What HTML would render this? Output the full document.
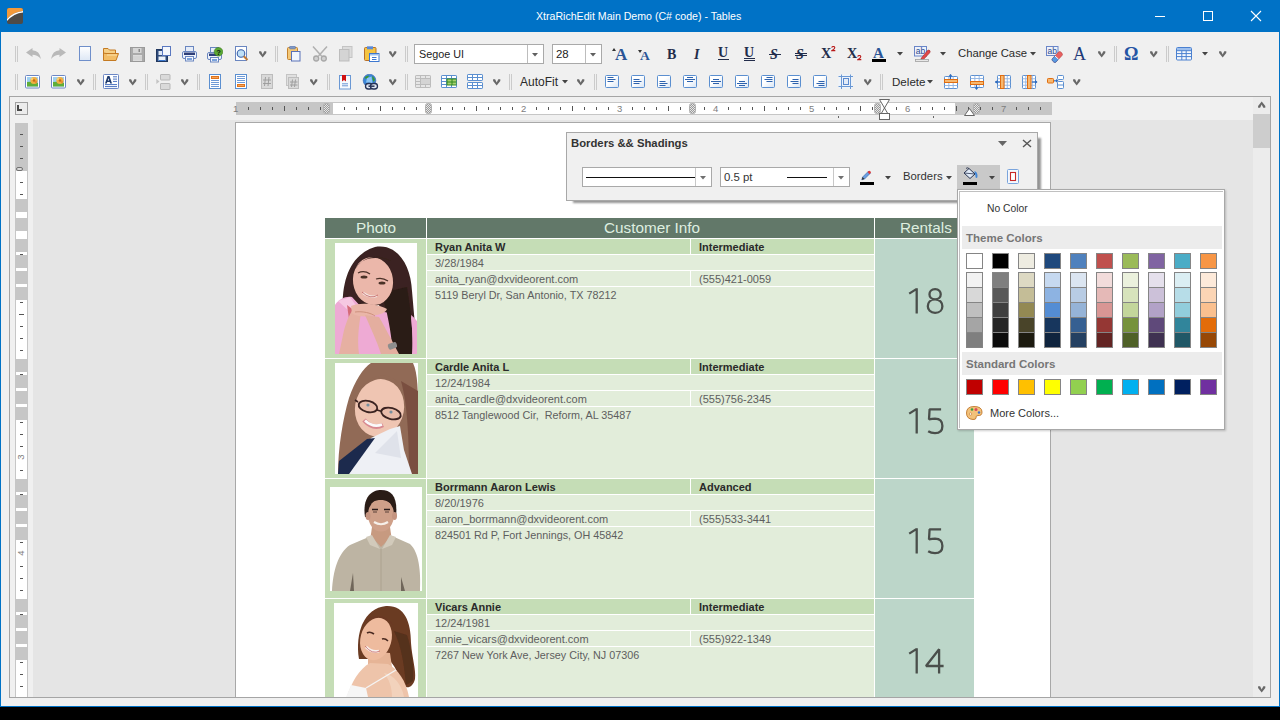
<!DOCTYPE html>
<html><head><meta charset="utf-8">
<style>
*{margin:0;padding:0;box-sizing:border-box}
html,body{width:1280px;height:720px;overflow:hidden;background:#000;font-family:"Liberation Sans", sans-serif;}
.a{position:absolute}
.win{position:absolute;left:0;top:0;width:1280px;height:707px;background:#0072c6}
.client{position:absolute;left:1px;top:32px;width:1278px;height:674px;background:#f0f0f0}
.t{position:absolute;white-space:pre;line-height:1}
.sep{position:absolute;width:3px;height:16px;border-left:1px solid #cbcbcb;border-right:1px solid #cbcbcb}
.chev{position:absolute;width:8px;height:6px}
</style></head><body>
<div class="win">

<svg class="a" style="left:7px;top:8px" width="16" height="16" viewBox="0 0 16 16">
<rect x="0" y="0" width="16" height="16" rx="2" fill="#4d4b48"/>
<path d="M2 0 H14 Q16 0 16 2 V3 Q6 4 0 11 V2 Q0 0 2 0Z" fill="#f39a3a"/>
<path d="M0 11 Q6 4 16 3 V4.6 Q7 5.5 0 13Z" fill="#fff"/>
</svg>
<div class="t" style="left:536px;top:11px;font-size:10.6px;color:#fff">XtraRichEdit Main Demo (C# code) - Tables</div>
<div class="a" style="left:1155px;top:16px;width:10px;height:1px;background:#fff"></div>
<div class="a" style="left:1203px;top:11px;width:10px;height:10px;border:1px solid #fff"></div>
<svg class="a" style="left:1250px;top:10px" width="12" height="12" viewBox="0 0 12 12"><path d="M1 1 L11 11 M11 1 L1 11" stroke="#fff" stroke-width="1.1"/></svg>

<div class="client"></div>
</div>
<div class="sep" style="left:15px;top:46px"></div>
<div class="sep" style="left:275px;top:46px"></div>
<div class="sep" style="left:405px;top:46px"></div>
<div class="sep" style="left:1114px;top:46px"></div>
<div class="sep" style="left:1166px;top:46px"></div>
<svg class="a" style="left:26px;top:48px" width="16" height="12" viewBox="0 0 16 12"><path d="M0 4.5 L6.5 0 V2.3 Q13.5 2.6 15 11 Q11 6.8 6.5 6.8 V9 Z" fill="#b9b9b9"/></svg>
<svg class="a" style="left:50px;top:48px" width="16" height="12" viewBox="0 0 16 12"><path d="M16 4.5 L9.5 0 V2.3 Q2.5 2.6 1 11 Q5 6.8 9.5 6.8 V9 Z" fill="#b9b9b9"/></svg>
<svg class="a" style="left:79px;top:46px" width="12" height="15" viewBox="0 0 12 15"><defs><linearGradient id="nd" x1="0" y1="0" x2="0" y2="1"><stop offset="0" stop-color="#fff"/><stop offset="1" stop-color="#dde7f5"/></linearGradient></defs><rect x="0.5" y="0.5" width="11" height="14" fill="url(#nd)" stroke="#6f8fca"/></svg>
<svg class="a" style="left:103px;top:47px" width="16" height="14" viewBox="0 0 16 14"><path d="M0.5 1.5 H5 L6.5 3 H12.5 V7 H0.5Z" fill="#f5cf86" stroke="#c47a22"/><path d="M3 6.5 H15.5 L13 13.5 H0.5 V6 Z" fill="#f2bd66" stroke="#c47a22"/><path d="M4 8 H14" stroke="#fbe1a8"/></svg>
<svg class="a" style="left:130px;top:47px" width="15" height="15" viewBox="0 0 15 15"><rect x="0.5" y="0.5" width="14" height="14" fill="#aaaaaa" stroke="#9a9a9a"/><rect x="3" y="1" width="8.5" height="5" fill="#d6d6d6"/><rect x="8.5" y="2" width="1.5" height="3" fill="#8a8a8a"/><rect x="3" y="8" width="9" height="6" fill="#dcdcdc"/><path d="M3 10 H12 M3 12 H12" stroke="#c4c4c4" stroke-width="0.6"/></svg>
<svg class="a" style="left:156px;top:46px" width="16" height="16" viewBox="0 0 16 16"><rect x="0.5" y="3.5" width="11" height="12" fill="#2f4c7c" stroke="#22385f"/><rect x="2.5" y="5" width="4" height="4" fill="#dfe8f6"/><rect x="2.5" y="10.5" width="7" height="4.5" fill="#eef3fa"/><rect x="2.5" y="14" width="7" height="1" fill="#3a78d0"/><rect x="6.5" y="0.5" width="8" height="9" fill="#f4f7fc" stroke="#5a78c0"/></svg>
<svg class="a" style="left:182px;top:46px" width="15" height="16" viewBox="0 0 15 16"><rect x="3.5" y="0.5" width="8" height="8" fill="#e6edf8" stroke="#6a86c0"/><rect x="0.5" y="5.5" width="14" height="7" rx="1.5" fill="#eef3fb" stroke="#6a86c0"/><rect x="2" y="6.5" width="11" height="2.5" fill="#2d3e78"/><rect x="3.5" y="10.5" width="8" height="4.5" fill="#f4f7fc" stroke="#6a86c0"/><rect x="5" y="12" width="5" height="2" fill="#7aa2dc"/></svg>
<svg class="a" style="left:207px;top:47px" width="16" height="16" viewBox="0 0 16 16"><rect x="3.5" y="0.5" width="8" height="8" fill="#e6edf8" stroke="#6a86c0"/><rect x="0.5" y="5.5" width="14" height="7" rx="1.5" fill="#eef3fb" stroke="#6a86c0"/><rect x="2" y="6.5" width="11" height="2.5" fill="#2d3e78"/><rect x="3.5" y="10.5" width="8" height="4.5" fill="#f4f7fc" stroke="#6a86c0"/><rect x="5" y="12" width="5" height="2" fill="#7aa2dc"/><circle cx="11.5" cy="4.8" r="4.3" fill="#5aa832" stroke="#3d7a20" stroke-width="0.6"/><text x="11.5" y="7.8" font-size="7.5" text-anchor="middle" fill="#111" font-family="Liberation Sans" font-weight="bold">?</text></svg>
<svg class="a" style="left:235px;top:46px" width="14" height="16" viewBox="0 0 14 16"><rect x="0.5" y="0.5" width="11" height="14" fill="#fff" stroke="#6a86c0"/><circle cx="6" cy="7.5" r="3.8" fill="#bfe0f7" stroke="#3a5fa8" stroke-width="1.1"/><path d="M8.8 10.3 L12.5 14" stroke="#c27a36" stroke-width="2"/></svg>
<svg class="a" style="left:259px;top:51px" width="8" height="7" viewBox="0 0 8 7"><path d="M0.1 0.2 L2.1 0.2 L3.7 3.5 L5.3 0.2 L7.3 0.2 L7.3 2.1 L3.7 6.5 L0.1 2.1 Z" fill="#686868"/></svg>
<svg class="a" style="left:287px;top:46px" width="14" height="16" viewBox="0 0 14 16"><rect x="0.5" y="1.5" width="10" height="12" rx="1" fill="#f4c877" stroke="#c4822e"/><rect x="2.5" y="0.3" width="6" height="2.5" rx="1" fill="#7e98c8" stroke="#4f6ca6" stroke-width="0.6"/><rect x="4.5" y="5.5" width="8.5" height="9.5" fill="#f2f6fc" stroke="#5a72b8"/></svg>
<svg class="a" style="left:312px;top:46px" width="16" height="16" viewBox="0 0 16 16"><path d="M1 0.5 L9.5 10 M15 0.5 L6.5 10" stroke="#b0b0b0" stroke-width="1.5"/><circle cx="4.2" cy="12.5" r="2.5" fill="#d0d0d0" stroke="#a8a8a8" stroke-width="1.3"/><circle cx="11.8" cy="12.5" r="2.5" fill="#d0d0d0" stroke="#a8a8a8" stroke-width="1.3"/></svg>
<svg class="a" style="left:339px;top:46px" width="14" height="16" viewBox="0 0 14 16"><rect x="3.5" y="0.5" width="9.5" height="11" fill="#dcdcdc" stroke="#c4c4c4"/><rect x="0.5" y="3.5" width="9.5" height="11.5" fill="#d4d4d4" stroke="#bdbdbd"/></svg>
<svg class="a" style="left:364px;top:46px" width="16" height="16" viewBox="0 0 16 16"><rect x="0.5" y="1.5" width="11.5" height="13" rx="1" fill="#f5c542" stroke="#b8702a"/><rect x="3" y="0.3" width="6" height="3" fill="#5a8ad8"/><rect x="5.5" y="7.5" width="9.5" height="8" fill="#fff" stroke="#3d78d0"/><rect x="6" y="8" width="9" height="1.5" fill="#9ec0ec"/><path d="M8 11.5 H12.5 M8 13.5 H12.5" stroke="#3d78d0"/></svg>
<svg class="a" style="left:389px;top:51px" width="8" height="7" viewBox="0 0 8 7"><path d="M0.1 0.2 L2.1 0.2 L3.7 3.5 L5.3 0.2 L7.3 0.2 L7.3 2.1 L3.7 6.5 L0.1 2.1 Z" fill="#686868"/></svg>
<div class="a" style="left:414px;top:44px;width:130px;height:20px;background:#fff;border:1px solid #a9a9a9"></div>
<div class="a" style="left:527px;top:45px;width:1px;height:18px;background:#bdbdbd"></div>
<svg class="a" style="left:532px;top:53px" width="6" height="4" viewBox="0 0 6 4"><path d="M0 0 H6 L3 3.5Z" fill="#606060"/></svg>
<div class="t" style="left:419px;top:49px;font-size:10.8px;color:#222;font-weight:normal;">Segoe UI</div>
<div class="a" style="left:552px;top:44px;width:50px;height:20px;background:#fff;border:1px solid #a9a9a9"></div>
<div class="a" style="left:585px;top:45px;width:1px;height:18px;background:#bdbdbd"></div>
<svg class="a" style="left:590px;top:53px" width="6" height="4" viewBox="0 0 6 4"><path d="M0 0 H6 L3 3.5Z" fill="#606060"/></svg>
<div class="t" style="left:556px;top:49px;font-size:11.4px;color:#222;font-weight:normal;">28</div>
<div class="t" style="left:615px;top:46px;font-family:'Liberation Serif', serif;font-size:17px;color:#2a5596;font-weight:bold;font-style:normal;">A</div>
<svg class="a" style="left:612px;top:48px" width="5" height="4" viewBox="0 0 5 4"><path d="M0 3 L2 0 L4 3Z" fill="#333"/></svg>
<div class="t" style="left:640px;top:49px;font-family:'Liberation Serif', serif;font-size:13.5px;color:#2a5596;font-weight:bold;font-style:normal;">A</div>
<svg class="a" style="left:638px;top:50px" width="5" height="4" viewBox="0 0 5 4"><path d="M0 0 L4 0 L2 3Z" fill="#333"/></svg>
<div class="t" style="left:667px;top:48px;font-family:'Liberation Serif', serif;font-size:14px;color:#222c4a;font-weight:bold;font-style:normal;">B</div>
<div class="t" style="left:694px;top:48px;font-family:'Liberation Serif', serif;font-size:14px;color:#222c4a;font-weight:bold;font-style:italic;">I</div>
<div class="t" style="left:718px;top:46px;font-family:'Liberation Serif', serif;font-size:14px;color:#222c4a;font-weight:bold;font-style:normal;">U</div>
<div class="a" style="left:718px;top:59px;width:11px;height:1px;background:#222c4a"></div>
<div class="t" style="left:744px;top:46px;font-family:'Liberation Serif', serif;font-size:14px;color:#222c4a;font-weight:bold;font-style:normal;">U</div>
<div class="a" style="left:744px;top:58px;width:11px;height:1px;background:#222c4a"></div>
<div class="a" style="left:744px;top:60px;width:11px;height:1px;background:#222c4a"></div>
<div class="t" style="left:770px;top:48px;font-family:'Liberation Serif', serif;font-size:14px;color:#222c4a;font-weight:bold;font-style:italic;">S</div>
<div class="a" style="left:769px;top:54px;width:12px;height:1px;background:#222c4a"></div>
<div class="t" style="left:796px;top:48px;font-family:'Liberation Serif', serif;font-size:14px;color:#222c4a;font-weight:bold;font-style:italic;">S</div>
<div class="a" style="left:795px;top:53px;width:12px;height:1px;background:#222c4a"></div>
<div class="a" style="left:795px;top:55px;width:12px;height:1px;background:#222c4a"></div>
<div class="t" style="left:821px;top:46px;font-family:'Liberation Serif', serif;font-size:14.2px;color:#222c4a;font-weight:bold;font-style:normal;">X</div>
<svg class="a" style="left:831px;top:46px" width="5" height="6" viewBox="0 0 5 6"><path d="M0.7 1.6 Q1 0.5 2.3 0.5 Q3.8 0.5 3.8 1.8 Q3.8 2.8 0.8 4.6 H4.3" fill="none" stroke="#b81818" stroke-width="1.1"/></svg>
<div class="t" style="left:847px;top:46px;font-family:'Liberation Serif', serif;font-size:14.2px;color:#222c4a;font-weight:bold;font-style:normal;">X</div>
<svg class="a" style="left:857px;top:55px" width="5" height="6" viewBox="0 0 5 6"><path d="M0.7 1.6 Q1 0.5 2.3 0.5 Q3.8 0.5 3.8 1.8 Q3.8 2.8 0.8 4.6 H4.3" fill="none" stroke="#b81818" stroke-width="1.1"/></svg>
<div class="t" style="left:873px;top:46px;font-family:'Liberation Serif', serif;font-size:15px;color:#2a5596;font-weight:bold;font-style:normal;">A</div>
<div class="a" style="left:872px;top:59px;width:14px;height:3px;background:#000"></div>
<svg class="a" style="left:897px;top:52px" width="6" height="4" viewBox="0 0 6 4"><path d="M0 0 H6 L3 3.5Z" fill="#444"/></svg>
<svg class="a" style="left:914px;top:46px" width="17" height="16" viewBox="0 0 17 16"><rect x="0.5" y="0.5" width="12" height="9.5" fill="#eef2fa" stroke="#6a86c8"/><text x="1.8" y="8" font-size="8.5" fill="#2a4a90" font-family="Liberation Sans">ab</text><path d="M7 12.5 L13.5 4.5 Q15 3.5 16 4.8 Q16.5 6 15.5 7 L9 14 Z" fill="#e04848" stroke="#a02a2a" stroke-width="0.6"/><path d="M7 12.5 L9 14 L6.3 14.6Z" fill="#333"/><rect x="1.5" y="13.5" width="13" height="2" fill="#e8e8e8" stroke="#a0a0a0" stroke-width="0.8"/></svg>
<svg class="a" style="left:940px;top:52px" width="6" height="4" viewBox="0 0 6 4"><path d="M0 0 H6 L3 3.5Z" fill="#444"/></svg>
<div class="t" style="left:958px;top:48px;font-size:11.3px;color:#2a2a2a;font-weight:normal;">Change Case</div>
<svg class="a" style="left:1030px;top:52px" width="6" height="4" viewBox="0 0 6 4"><path d="M0 0 H6 L3 3.5Z" fill="#444"/></svg>
<svg class="a" style="left:1046px;top:46px" width="17" height="17" viewBox="0 0 17 17"><rect x="0.5" y="0.5" width="11.5" height="9" fill="#eef2fa" stroke="#6a86c8"/><text x="1.5" y="8" font-size="8.5" fill="#2a4a90" font-family="Liberation Sans">ab</text><path d="M6.5 12.5 L12.5 6 Q13.5 5 14.8 6 L16 7.2 Q17 8.5 16 9.5 L10 16 Q9 17 7.8 16 L6.5 14.8 Q5.5 13.5 6.5 12.5Z" fill="#e86060" stroke="#b03a3a" stroke-width="0.6"/><path d="M6.5 12.5 L9 10 L12.5 13.2 L10 16 Q9 17 7.8 16 L6.5 14.8 Q5.5 13.5 6.5 12.5Z" fill="#5a9ae0" stroke="#2f6ab8" stroke-width="0.6"/><path d="M9 10 L12.5 13.2" stroke="#fff" stroke-width="1"/></svg>
<div class="t" style="left:1073px;top:45px;font-family:'Liberation Serif', serif;font-size:18px;color:#1f3b78;font-weight:normal;font-style:normal;">A</div>
<svg class="a" style="left:1098px;top:51px" width="8" height="7" viewBox="0 0 8 7"><path d="M0.1 0.2 L2.1 0.2 L3.7 3.5 L5.3 0.2 L7.3 0.2 L7.3 2.1 L3.7 6.5 L0.1 2.1 Z" fill="#686868"/></svg>
<div class="t" style="left:1124px;top:45px;font-family:'Liberation Serif', serif;font-size:18px;color:#2454a4;font-weight:bold;font-style:normal;">Ω</div>
<svg class="a" style="left:1150px;top:51px" width="8" height="7" viewBox="0 0 8 7"><path d="M0.1 0.2 L2.1 0.2 L3.7 3.5 L5.3 0.2 L7.3 0.2 L7.3 2.1 L3.7 6.5 L0.1 2.1 Z" fill="#686868"/></svg>
<svg class="a" style="left:1176px;top:46px" width="16" height="16" viewBox="0 0 16 16"><rect x="0.5" y="1.5" width="15" height="12.5" rx="1" fill="#f4f8fd" stroke="#4a80d0"/><rect x="1" y="2" width="14" height="2.5" fill="#9dbfee"/><path d="M1 4.7 H15 M1 7.6 H15 M1 10.6 H15 M5.8 4.7 V14 M10.2 4.7 V14" stroke="#4a80d0" stroke-width="1"/></svg>
<svg class="a" style="left:1202px;top:52px" width="6" height="4" viewBox="0 0 6 4"><path d="M0 0 H6 L3 3.5Z" fill="#444"/></svg>
<svg class="a" style="left:1219px;top:51px" width="8" height="7" viewBox="0 0 8 7"><path d="M0.1 0.2 L2.1 0.2 L3.7 3.5 L5.3 0.2 L7.3 0.2 L7.3 2.1 L3.7 6.5 L0.1 2.1 Z" fill="#686868"/></svg>
<div class="sep" style="left:15px;top:74px"></div>
<div class="sep" style="left:93px;top:74px"></div>
<div class="sep" style="left:145px;top:74px"></div>
<div class="sep" style="left:197px;top:74px"></div>
<div class="sep" style="left:327px;top:74px"></div>
<div class="sep" style="left:405px;top:74px"></div>
<div class="sep" style="left:509px;top:74px"></div>
<div class="sep" style="left:594px;top:74px"></div>
<div class="sep" style="left:880px;top:74px"></div>
<svg class="a" style="left:25px;top:75px" width="15" height="14" viewBox="0 0 15 14"><rect x="0.5" y="0.5" width="14" height="12.5" rx="1" fill="#fff" stroke="#6b86c4"/><rect x="2" y="2" width="11" height="9.5" fill="#9fd0f0"/><path d="M2 7 Q7 6 13 8 V11.5 H2Z" fill="#5fae3a"/><circle cx="9" cy="5.5" r="3.6" fill="#f2b040"/><circle cx="7" cy="4" r="1.2" fill="#f8d070"/><circle cx="11" cy="7" r="1.3" fill="#e89030"/><circle cx="9" cy="5.5" r="1.3" fill="#c86a18"/></svg>
<svg class="a" style="left:51px;top:75px" width="15" height="14" viewBox="0 0 15 14"><rect x="0.5" y="0.5" width="14" height="12.5" rx="1" fill="#fff" stroke="#6b86c4"/><rect x="2" y="2" width="11" height="9.5" fill="#9fd0f0"/><path d="M2 7 Q7 6 13 8 V11.5 H2Z" fill="#5fae3a"/><circle cx="9" cy="5.5" r="3.6" fill="#f2b040"/><circle cx="7" cy="4" r="1.2" fill="#f8d070"/><circle cx="11" cy="7" r="1.3" fill="#e89030"/><circle cx="9" cy="5.5" r="1.3" fill="#c86a18"/></svg>
<svg class="a" style="left:77px;top:79px" width="8" height="7" viewBox="0 0 8 7"><path d="M0.1 0.2 L2.1 0.2 L3.7 3.5 L5.3 0.2 L7.3 0.2 L7.3 2.1 L3.7 6.5 L0.1 2.1 Z" fill="#686868"/></svg>
<svg class="a" style="left:103px;top:74px" width="16" height="16" viewBox="0 0 16 16"><rect x="0.5" y="0.5" width="15" height="14" rx="0.8" fill="#fff" stroke="#6b86c4"/><path d="M2 9.5 L4.5 2 H6.5 L9 9.5 H7.2 L6.7 8 H4.3 L3.8 9.5Z M4.8 6.5 H6.2 L5.5 4.2Z" fill="#1f3b6e" fill-rule="evenodd"/><path d="M10 2.8 H14 M10 5.1 H14 M10 7.4 H14 M2 10.6 H14 M2 12.6 H14" stroke="#4a72c0" stroke-width="1"/></svg>
<svg class="a" style="left:129px;top:79px" width="8" height="7" viewBox="0 0 8 7"><path d="M0.1 0.2 L2.1 0.2 L3.7 3.5 L5.3 0.2 L7.3 0.2 L7.3 2.1 L3.7 6.5 L0.1 2.1 Z" fill="#686868"/></svg>
<svg class="a" style="left:156px;top:74px" width="15" height="16" viewBox="0 0 15 16"><rect x="4.5" y="0.5" width="9.5" height="5.5" rx="0.5" fill="#dadada" stroke="#b8b8b8"/><rect x="4.5" y="9.5" width="9.5" height="6" rx="0.5" fill="#dadada" stroke="#b8b8b8"/><path d="M0.3 5 L3.5 7.5 L0.3 10Z" fill="#c4c4c4"/></svg>
<svg class="a" style="left:181px;top:79px" width="8" height="7" viewBox="0 0 8 7"><path d="M0.1 0.2 L2.1 0.2 L3.7 3.5 L5.3 0.2 L7.3 0.2 L7.3 2.1 L3.7 6.5 L0.1 2.1 Z" fill="#686868"/></svg>
<svg class="a" style="left:209px;top:74px" width="12" height="15" viewBox="0 0 12 15"><rect x="0.5" y="0.5" width="11" height="14" fill="#fff" stroke="#5b8fd0"/><rect x="2" y="2" width="8" height="3" fill="#e0741c"/><path d="M3 3.5 H9" stroke="#f7b070" stroke-width="0.8"/><path d="M2 6.5 H10 M2 8.5 H10 M2 10.5 H10 M2 12.5 H10" stroke="#6f9ad6"/></svg>
<svg class="a" style="left:235px;top:74px" width="12" height="15" viewBox="0 0 12 15"><rect x="0.5" y="0.5" width="11" height="14" fill="#fff" stroke="#5b8fd0"/><rect x="2" y="10" width="8" height="3" fill="#e0741c"/><path d="M3 11.5 H9" stroke="#f7b070" stroke-width="0.8"/><path d="M2 2.5 H10 M2 4.5 H10 M2 6.5 H10 M2 8.5 H10" stroke="#6f9ad6"/></svg>
<svg class="a" style="left:261px;top:74px" width="12" height="15" viewBox="0 0 12 15"><rect x="0.5" y="0.5" width="11" height="14" fill="#d9d9d9" stroke="#bdbdbd"/><path d="M4.5 3 L3.5 12 M8 3 L7 12 M2 6 H10 M2 9.5 H10" stroke="#9a9a9a" stroke-width="0.9"/></svg>
<svg class="a" style="left:286px;top:74px" width="14" height="15" viewBox="0 0 14 15"><rect x="0.5" y="0.5" width="10" height="11" fill="#e0e0e0" stroke="#c4c4c4"/><rect x="2.5" y="3.5" width="10" height="11" fill="#d9d9d9" stroke="#bdbdbd"/><path d="M6.5 5.5 L5.5 13 M9.5 5.5 L8.5 13 M4 8 H11.5 M4 11 H11.5" stroke="#9a9a9a" stroke-width="0.9"/></svg>
<svg class="a" style="left:310px;top:79px" width="8" height="7" viewBox="0 0 8 7"><path d="M0.1 0.2 L2.1 0.2 L3.7 3.5 L5.3 0.2 L7.3 0.2 L7.3 2.1 L3.7 6.5 L0.1 2.1 Z" fill="#686868"/></svg>
<svg class="a" style="left:339px;top:75px" width="12" height="15" viewBox="0 0 12 15"><rect x="0.5" y="0.5" width="11" height="13.5" fill="#f6f9fd" stroke="#6a98d4"/><path d="M3 0 H7 V6.5 L5 5 L3 6.5Z" fill="#d01010"/><path d="M3 8.8 H9 M3 10.8 H9" stroke="#5a8ad0" stroke-width="0.9"/></svg>
<svg class="a" style="left:362px;top:74px" width="17" height="16" viewBox="0 0 17 16"><circle cx="7.5" cy="6.5" r="6.3" fill="#3a86d8" stroke="#2a5aa8" stroke-width="0.6"/><path d="M2.5 4 Q4 1.5 7 1.5 L6 4 Q3.5 5 2.5 4Z M10 2 Q12.5 3.5 13 6 L11.5 8 L10.5 5Z" fill="#3a9a2a"/><path d="M5 4 L9.5 2.5 L10.5 9 L4 8.5Z" fill="#8ac4f4"/><rect x="3.5" y="9.5" width="7" height="5.5" rx="2.7" fill="#dfe6f2" stroke="#253256" stroke-width="1.3"/><rect x="8.5" y="9.5" width="7" height="5.5" rx="2.7" fill="#dfe6f2" stroke="#253256" stroke-width="1.3"/><path d="M6.5 12.2 H12.5" stroke="#253256" stroke-width="1.5"/></svg>
<svg class="a" style="left:389px;top:79px" width="8" height="7" viewBox="0 0 8 7"><path d="M0.1 0.2 L2.1 0.2 L3.7 3.5 L5.3 0.2 L7.3 0.2 L7.3 2.1 L3.7 6.5 L0.1 2.1 Z" fill="#686868"/></svg>
<svg class="a" style="left:415px;top:75px" width="17" height="14" viewBox="0 0 17 14"><rect x="0.5" y="0.5" width="15" height="12" rx="0.8" fill="#bcbcbc" stroke="#bcbcbc"/><rect x="1" y="1" width="4" height="2" fill="#e6e6e6"/><rect x="1" y="4" width="4" height="2" fill="#e6e6e6"/><rect x="1" y="7" width="4" height="2" fill="#e6e6e6"/><rect x="1" y="10" width="4" height="2" fill="#e6e6e6"/><rect x="6" y="1" width="4" height="2" fill="#e6e6e6"/><rect x="6" y="4" width="4" height="2" fill="#e6e6e6"/><rect x="6" y="7" width="4" height="2" fill="#e6e6e6"/><rect x="6" y="10" width="4" height="2" fill="#e6e6e6"/><rect x="11" y="1" width="4" height="2" fill="#e6e6e6"/><rect x="11" y="4" width="4" height="2" fill="#e6e6e6"/><rect x="11" y="7" width="4" height="2" fill="#e6e6e6"/><rect x="11" y="10" width="4" height="2" fill="#e6e6e6"/><rect x="6" y="4" width="9" height="5" fill="#d4d4d4"/></svg>
<svg class="a" style="left:441px;top:75px" width="17" height="14" viewBox="0 0 17 14"><rect x="0.5" y="0.5" width="15" height="12" rx="0.8" fill="#5b8fd0" stroke="#5b8fd0"/><rect x="1" y="1" width="4" height="2" fill="#fff"/><rect x="1" y="4" width="4" height="2" fill="#fff"/><rect x="1" y="7" width="4" height="2" fill="#fff"/><rect x="1" y="10" width="4" height="2" fill="#fff"/><rect x="6" y="1" width="4" height="2" fill="#fff"/><rect x="6" y="4" width="4" height="2" fill="#fff"/><rect x="6" y="7" width="4" height="2" fill="#fff"/><rect x="6" y="10" width="4" height="2" fill="#fff"/><rect x="11" y="1" width="4" height="2" fill="#fff"/><rect x="11" y="4" width="4" height="2" fill="#fff"/><rect x="11" y="7" width="4" height="2" fill="#fff"/><rect x="11" y="10" width="4" height="2" fill="#fff"/><rect x="5.5" y="3.5" width="10" height="7" fill="#2e8a1e"/><rect x="6.5" y="4.5" width="4" height="2" fill="#a6d070"/><rect x="11.5" y="4.5" width="3.5" height="2" fill="#a6d070"/><rect x="6.5" y="7.5" width="4" height="2" fill="#a6d070"/><rect x="11.5" y="7.5" width="3.5" height="2" fill="#a6d070"/></svg>
<svg class="a" style="left:467px;top:74px" width="17" height="16" viewBox="0 0 17 16"><rect x="0.5" y="0.5" width="15" height="6" rx="0.8" fill="#5b8fd0" stroke="#5b8fd0"/><rect x="1" y="1" width="4" height="2" fill="#fff"/><rect x="1" y="4" width="4" height="2" fill="#fff"/><rect x="6" y="1" width="4" height="2" fill="#fff"/><rect x="6" y="4" width="4" height="2" fill="#fff"/><rect x="11" y="1" width="4" height="2" fill="#fff"/><rect x="11" y="4" width="4" height="2" fill="#fff"/><rect x="0.5" y="8.5" width="15" height="6" rx="0.8" fill="#5b8fd0" stroke="#5b8fd0"/><rect x="1" y="9" width="4" height="2" fill="#fff"/><rect x="1" y="12" width="4" height="2" fill="#fff"/><rect x="6" y="9" width="4" height="2" fill="#fff"/><rect x="6" y="12" width="4" height="2" fill="#fff"/><rect x="11" y="9" width="4" height="2" fill="#fff"/><rect x="11" y="12" width="4" height="2" fill="#fff"/></svg>
<svg class="a" style="left:493px;top:79px" width="8" height="7" viewBox="0 0 8 7"><path d="M0.1 0.2 L2.1 0.2 L3.7 3.5 L5.3 0.2 L7.3 0.2 L7.3 2.1 L3.7 6.5 L0.1 2.1 Z" fill="#686868"/></svg>
<div class="t" style="left:520px;top:76px;font-size:12px;color:#2a2a2a;font-weight:normal;">AutoFit</div>
<svg class="a" style="left:562px;top:80px" width="6" height="4" viewBox="0 0 6 4"><path d="M0 0 H6 L3 3.5Z" fill="#444"/></svg>
<svg class="a" style="left:577px;top:79px" width="8" height="7" viewBox="0 0 8 7"><path d="M0.1 0.2 L2.1 0.2 L3.7 3.5 L5.3 0.2 L7.3 0.2 L7.3 2.1 L3.7 6.5 L0.1 2.1 Z" fill="#686868"/></svg>
<svg class="a" style="left:605px;top:75px" width="14" height="13" viewBox="0 0 14 13"><defs><linearGradient id="ag0" x1="0" y1="0" x2="1" y2="1"><stop offset="0.4" stop-color="#fff"/><stop offset="1" stop-color="#d9e5f4"/></linearGradient></defs><rect x="0.5" y="0.5" width="13" height="12" rx="1" fill="url(#ag0)" stroke="#5b8fd0"/><path d="M2.5 2.5 H8.5 M2.5 4.5 H10.5 M2.5 6.5 H8.5 " stroke="#2d62ad" stroke-width="1.2"/></svg>
<svg class="a" style="left:631px;top:75px" width="14" height="13" viewBox="0 0 14 13"><defs><linearGradient id="ag1" x1="0" y1="0" x2="1" y2="1"><stop offset="0.4" stop-color="#fff"/><stop offset="1" stop-color="#d9e5f4"/></linearGradient></defs><rect x="0.5" y="0.5" width="13" height="12" rx="1" fill="url(#ag1)" stroke="#5b8fd0"/><path d="M2.5 4.5 H8.5 M2.5 6.5 H10.5 M2.5 8.5 H8.5 " stroke="#2d62ad" stroke-width="1.2"/></svg>
<svg class="a" style="left:657px;top:75px" width="14" height="13" viewBox="0 0 14 13"><defs><linearGradient id="ag2" x1="0" y1="0" x2="1" y2="1"><stop offset="0.4" stop-color="#fff"/><stop offset="1" stop-color="#d9e5f4"/></linearGradient></defs><rect x="0.5" y="0.5" width="13" height="12" rx="1" fill="url(#ag2)" stroke="#5b8fd0"/><path d="M2.5 6.5 H8.5 M2.5 8.5 H10.5 M2.5 10.5 H8.5 " stroke="#2d62ad" stroke-width="1.2"/></svg>
<svg class="a" style="left:683px;top:75px" width="14" height="13" viewBox="0 0 14 13"><defs><linearGradient id="ag3" x1="0" y1="0" x2="1" y2="1"><stop offset="0.4" stop-color="#fff"/><stop offset="1" stop-color="#d9e5f4"/></linearGradient></defs><rect x="0.5" y="0.5" width="13" height="12" rx="1" fill="url(#ag3)" stroke="#5b8fd0"/><path d="M4.0 2.5 H10.0 M2.0 4.5 H12.0 M4.0 6.5 H10.0 " stroke="#2d62ad" stroke-width="1.2"/></svg>
<svg class="a" style="left:709px;top:75px" width="14" height="13" viewBox="0 0 14 13"><defs><linearGradient id="ag4" x1="0" y1="0" x2="1" y2="1"><stop offset="0.4" stop-color="#fff"/><stop offset="1" stop-color="#d9e5f4"/></linearGradient></defs><rect x="0.5" y="0.5" width="13" height="12" rx="1" fill="url(#ag4)" stroke="#5b8fd0"/><path d="M4.0 4.5 H10.0 M2.0 6.5 H12.0 M4.0 8.5 H10.0 " stroke="#2d62ad" stroke-width="1.2"/></svg>
<svg class="a" style="left:735px;top:75px" width="14" height="13" viewBox="0 0 14 13"><defs><linearGradient id="ag5" x1="0" y1="0" x2="1" y2="1"><stop offset="0.4" stop-color="#fff"/><stop offset="1" stop-color="#d9e5f4"/></linearGradient></defs><rect x="0.5" y="0.5" width="13" height="12" rx="1" fill="url(#ag5)" stroke="#5b8fd0"/><path d="M4.0 6.5 H10.0 M2.0 8.5 H12.0 M4.0 10.5 H10.0 " stroke="#2d62ad" stroke-width="1.2"/></svg>
<svg class="a" style="left:761px;top:75px" width="14" height="13" viewBox="0 0 14 13"><defs><linearGradient id="ag6" x1="0" y1="0" x2="1" y2="1"><stop offset="0.4" stop-color="#fff"/><stop offset="1" stop-color="#d9e5f4"/></linearGradient></defs><rect x="0.5" y="0.5" width="13" height="12" rx="1" fill="url(#ag6)" stroke="#5b8fd0"/><path d="M5.5 2.5 H11.5 M3.5 4.5 H11.5 M5.5 6.5 H11.5 " stroke="#2d62ad" stroke-width="1.2"/></svg>
<svg class="a" style="left:787px;top:75px" width="14" height="13" viewBox="0 0 14 13"><defs><linearGradient id="ag7" x1="0" y1="0" x2="1" y2="1"><stop offset="0.4" stop-color="#fff"/><stop offset="1" stop-color="#d9e5f4"/></linearGradient></defs><rect x="0.5" y="0.5" width="13" height="12" rx="1" fill="url(#ag7)" stroke="#5b8fd0"/><path d="M5.5 4.5 H11.5 M3.5 6.5 H11.5 M5.5 8.5 H11.5 " stroke="#2d62ad" stroke-width="1.2"/></svg>
<svg class="a" style="left:813px;top:75px" width="14" height="13" viewBox="0 0 14 13"><defs><linearGradient id="ag8" x1="0" y1="0" x2="1" y2="1"><stop offset="0.4" stop-color="#fff"/><stop offset="1" stop-color="#d9e5f4"/></linearGradient></defs><rect x="0.5" y="0.5" width="13" height="12" rx="1" fill="url(#ag8)" stroke="#5b8fd0"/><path d="M5.5 6.5 H11.5 M3.5 8.5 H11.5 M5.5 10.5 H11.5 " stroke="#2d62ad" stroke-width="1.2"/></svg>
<svg class="a" style="left:838px;top:74px" width="15" height="15" viewBox="0 0 15 15"><rect x="0.5" y="0.5" width="14" height="14" rx="1.5" fill="#eef3fa"/><path d="M3.5 0.5 V15 M12.5 0.5 V15 M0.5 2.5 H15 M0.5 12.5 H15" stroke="#6a98d4"/><rect x="5.5" y="4.5" width="5" height="6" fill="#e4ecf8" stroke="#5a8ad0"/></svg>
<svg class="a" style="left:864px;top:79px" width="8" height="7" viewBox="0 0 8 7"><path d="M0.1 0.2 L2.1 0.2 L3.7 3.5 L5.3 0.2 L7.3 0.2 L7.3 2.1 L3.7 6.5 L0.1 2.1 Z" fill="#686868"/></svg>
<div class="t" style="left:892px;top:76px;font-size:11.6px;color:#2a2a2a;font-weight:normal;">Delete</div>
<svg class="a" style="left:927px;top:80px" width="6" height="4" viewBox="0 0 6 4"><path d="M0 0 H6 L3 3.5Z" fill="#444"/></svg>
<svg class="a" style="left:944px;top:74px" width="17" height="16" viewBox="0 0 17 16"><rect x="0.5" y="2.5" width="13" height="12" rx="0.8" fill="#fff" stroke="#5b8fd0"/><path d="M4.833333333333333 2.5 V14.5" stroke="#8fb2e2" stroke-width="0.9"/><path d="M9.166666666666666 2.5 V14.5" stroke="#8fb2e2" stroke-width="0.9"/><path d="M0.5 5.5 H13.5" stroke="#8fb2e2" stroke-width="0.9"/><path d="M0.5 8.5 H13.5" stroke="#8fb2e2" stroke-width="0.9"/><path d="M0.5 11.5 H13.5" stroke="#8fb2e2" stroke-width="0.9"/><rect x="0.5" y="5.5" width="13" height="3" fill="#f6b870" stroke="#e06d10" stroke-width="1"/><path d="M6.5 5 V0.5" stroke="#2f6cc0" stroke-width="1.2"/><path d="M4.5 2.5 L6.5 0 L8.5 2.5Z" fill="#2f6cc0"/></svg>
<svg class="a" style="left:970px;top:74px" width="17" height="16" viewBox="0 0 17 16"><rect x="0.5" y="1.5" width="13" height="12" rx="0.8" fill="#fff" stroke="#5b8fd0"/><path d="M4.833333333333333 1.5 V13.5" stroke="#8fb2e2" stroke-width="0.9"/><path d="M9.166666666666666 1.5 V13.5" stroke="#8fb2e2" stroke-width="0.9"/><path d="M0.5 4.5 H13.5" stroke="#8fb2e2" stroke-width="0.9"/><path d="M0.5 7.5 H13.5" stroke="#8fb2e2" stroke-width="0.9"/><path d="M0.5 10.5 H13.5" stroke="#8fb2e2" stroke-width="0.9"/><rect x="0.5" y="7.5" width="13" height="3" fill="#f6b870" stroke="#e06d10" stroke-width="1"/><path d="M6.5 11 V15" stroke="#2f6cc0" stroke-width="1.2"/><path d="M4.5 13.5 L6.5 16 L8.5 13.5Z" fill="#2f6cc0"/></svg>
<svg class="a" style="left:995px;top:74px" width="17" height="16" viewBox="0 0 17 16"><rect x="2.5" y="1.5" width="13" height="13" rx="0.8" fill="#fff" stroke="#5b8fd0"/><path d="M5.75 1.5 V14.5" stroke="#8fb2e2" stroke-width="0.9"/><path d="M9.0 1.5 V14.5" stroke="#8fb2e2" stroke-width="0.9"/><path d="M12.25 1.5 V14.5" stroke="#8fb2e2" stroke-width="0.9"/><path d="M2.5 4.75 H15.5" stroke="#8fb2e2" stroke-width="0.9"/><path d="M2.5 8.0 H15.5" stroke="#8fb2e2" stroke-width="0.9"/><path d="M2.5 11.25 H15.5" stroke="#8fb2e2" stroke-width="0.9"/><rect x="5.5" y="1.5" width="3.5" height="13" fill="#f6b870" stroke="#e06d10" stroke-width="1"/><path d="M0 8 H5" stroke="#2f6cc0" stroke-width="1.2"/><path d="M2.5 6 L0 8 L2.5 10Z" fill="#2f6cc0"/></svg>
<svg class="a" style="left:1021px;top:74px" width="17" height="16" viewBox="0 0 17 16"><rect x="1.5" y="1.5" width="13" height="13" rx="0.8" fill="#fff" stroke="#5b8fd0"/><path d="M4.75 1.5 V14.5" stroke="#8fb2e2" stroke-width="0.9"/><path d="M8.0 1.5 V14.5" stroke="#8fb2e2" stroke-width="0.9"/><path d="M11.25 1.5 V14.5" stroke="#8fb2e2" stroke-width="0.9"/><path d="M1.5 4.75 H14.5" stroke="#8fb2e2" stroke-width="0.9"/><path d="M1.5 8.0 H14.5" stroke="#8fb2e2" stroke-width="0.9"/><path d="M1.5 11.25 H14.5" stroke="#8fb2e2" stroke-width="0.9"/><rect x="6.5" y="1.5" width="3.5" height="13" fill="#f6b870" stroke="#e06d10" stroke-width="1"/><path d="M11 8 H16" stroke="#2f6cc0" stroke-width="1.2"/><path d="M14 6 L16.5 8 L14 10Z" fill="#2f6cc0"/></svg>
<svg class="a" style="left:1047px;top:74px" width="17" height="16" viewBox="0 0 17 16"><rect x="0.5" y="4.5" width="6" height="4.5" rx="0.8" fill="#f6b870" stroke="#e06d10"/><path d="M7 6.8 H10" stroke="#2f6cc0" stroke-width="1.2"/><path d="M9 5 L11.5 6.8 L9 8.6Z" fill="#2f6cc0"/><rect x="10.5" y="1.5" width="6" height="4" rx="0.8" fill="#fff" stroke="#5b8fd0"/><rect x="10.5" y="7.5" width="6" height="7" rx="0.8" fill="#fff" stroke="#5b8fd0"/><path d="M11 11 H16" stroke="#5b8fd0"/></svg>
<svg class="a" style="left:1073px;top:79px" width="8" height="7" viewBox="0 0 8 7"><path d="M0.1 0.2 L2.1 0.2 L3.7 3.5 L5.3 0.2 L7.3 0.2 L7.3 2.1 L3.7 6.5 L0.1 2.1 Z" fill="#686868"/></svg>
<div class="a" style="left:9px;top:96px;width:1262px;height:602px;border:1px solid #a5a5a5;background:#f0f0f0;overflow:hidden">
<div class="a" style="left:23px;top:23px;width:1220px;height:577px;background:#e5e5e5;"></div>
<div class="a" style="left:1243px;top:0px;width:17px;height:600px;background:#ececec;"></div>
<div class="a" style="left:1243px;top:17px;width:17px;height:34px;background:#cdcdcd;"></div>
<svg class="a" style="left:1248px;top:4px" width="8" height="7" viewBox="0 0 8 7"><path d="M0.1 6.8 L2.1 6.8 L3.7 3.5 L5.3 6.8 L7.3 6.8 L7.3 4.9 L3.7 0.5 L0.1 4.9 Z" fill="#686868"/></svg>
<svg class="a" style="left:1248px;top:589px" width="8" height="7" viewBox="0 0 8 7"><path d="M0.1 0.2 L2.1 0.2 L3.7 3.5 L5.3 0.2 L7.3 0.2 L7.3 2.1 L3.7 6.5 L0.1 2.1 Z" fill="#686868"/></svg>
<div class="a" style="left:5px;top:5px;width:13px;height:13px;border:1px solid #a0a0a0;background:#ececec"></div>
<div class="a" style="left:7px;top:8px;width:2px;height:6px;background:#484848;"></div>
<div class="a" style="left:7px;top:12px;width:5px;height:2px;background:#484848;"></div>
<div class="a" style="left:226px;top:5px;width:816px;height:13px;background:#c6c6c6;"></div>
<div class="a" style="left:323px;top:6px;width:622px;height:11px;background:#fff;"></div>
<div class="a" style="left:238px;top:10px;width:1px;height:3px;background:#555;"></div>
<div class="a" style="left:250px;top:10px;width:1px;height:3px;background:#555;"></div>
<div class="a" style="left:262px;top:10px;width:1px;height:3px;background:#555;"></div>
<div class="a" style="left:274px;top:9px;width:1px;height:5px;background:#555;"></div>
<div class="a" style="left:286px;top:10px;width:1px;height:3px;background:#555;"></div>
<div class="a" style="left:298px;top:10px;width:1px;height:3px;background:#555;"></div>
<div class="a" style="left:310px;top:10px;width:1px;height:3px;background:#555;"></div>
<div class="a" style="left:334px;top:10px;width:1px;height:3px;background:#555;"></div>
<div class="a" style="left:346px;top:10px;width:1px;height:3px;background:#555;"></div>
<div class="a" style="left:358px;top:10px;width:1px;height:3px;background:#555;"></div>
<div class="a" style="left:370px;top:9px;width:1px;height:5px;background:#555;"></div>
<div class="a" style="left:382px;top:10px;width:1px;height:3px;background:#555;"></div>
<div class="a" style="left:394px;top:10px;width:1px;height:3px;background:#555;"></div>
<div class="a" style="left:406px;top:10px;width:1px;height:3px;background:#555;"></div>
<div class="a" style="left:430px;top:10px;width:1px;height:3px;background:#555;"></div>
<div class="a" style="left:442px;top:10px;width:1px;height:3px;background:#555;"></div>
<div class="a" style="left:454px;top:10px;width:1px;height:3px;background:#555;"></div>
<div class="a" style="left:466px;top:9px;width:1px;height:5px;background:#555;"></div>
<div class="a" style="left:478px;top:10px;width:1px;height:3px;background:#555;"></div>
<div class="a" style="left:490px;top:10px;width:1px;height:3px;background:#555;"></div>
<div class="a" style="left:502px;top:10px;width:1px;height:3px;background:#555;"></div>
<div class="a" style="left:526px;top:10px;width:1px;height:3px;background:#555;"></div>
<div class="a" style="left:538px;top:10px;width:1px;height:3px;background:#555;"></div>
<div class="a" style="left:550px;top:10px;width:1px;height:3px;background:#555;"></div>
<div class="a" style="left:562px;top:9px;width:1px;height:5px;background:#555;"></div>
<div class="a" style="left:574px;top:10px;width:1px;height:3px;background:#555;"></div>
<div class="a" style="left:586px;top:10px;width:1px;height:3px;background:#555;"></div>
<div class="a" style="left:598px;top:10px;width:1px;height:3px;background:#555;"></div>
<div class="a" style="left:622px;top:10px;width:1px;height:3px;background:#555;"></div>
<div class="a" style="left:634px;top:10px;width:1px;height:3px;background:#555;"></div>
<div class="a" style="left:646px;top:10px;width:1px;height:3px;background:#555;"></div>
<div class="a" style="left:658px;top:9px;width:1px;height:5px;background:#555;"></div>
<div class="a" style="left:670px;top:10px;width:1px;height:3px;background:#555;"></div>
<div class="a" style="left:682px;top:10px;width:1px;height:3px;background:#555;"></div>
<div class="a" style="left:694px;top:10px;width:1px;height:3px;background:#555;"></div>
<div class="a" style="left:718px;top:10px;width:1px;height:3px;background:#555;"></div>
<div class="a" style="left:730px;top:10px;width:1px;height:3px;background:#555;"></div>
<div class="a" style="left:742px;top:10px;width:1px;height:3px;background:#555;"></div>
<div class="a" style="left:754px;top:9px;width:1px;height:5px;background:#555;"></div>
<div class="a" style="left:766px;top:10px;width:1px;height:3px;background:#555;"></div>
<div class="a" style="left:778px;top:10px;width:1px;height:3px;background:#555;"></div>
<div class="a" style="left:790px;top:10px;width:1px;height:3px;background:#555;"></div>
<div class="a" style="left:814px;top:10px;width:1px;height:3px;background:#555;"></div>
<div class="a" style="left:826px;top:10px;width:1px;height:3px;background:#555;"></div>
<div class="a" style="left:838px;top:10px;width:1px;height:3px;background:#555;"></div>
<div class="a" style="left:850px;top:9px;width:1px;height:5px;background:#555;"></div>
<div class="a" style="left:862px;top:10px;width:1px;height:3px;background:#555;"></div>
<div class="a" style="left:874px;top:10px;width:1px;height:3px;background:#555;"></div>
<div class="a" style="left:886px;top:10px;width:1px;height:3px;background:#555;"></div>
<div class="a" style="left:910px;top:10px;width:1px;height:3px;background:#555;"></div>
<div class="a" style="left:922px;top:10px;width:1px;height:3px;background:#555;"></div>
<div class="a" style="left:934px;top:10px;width:1px;height:3px;background:#555;"></div>
<div class="a" style="left:946px;top:9px;width:1px;height:5px;background:#555;"></div>
<div class="a" style="left:958px;top:10px;width:1px;height:3px;background:#555;"></div>
<div class="a" style="left:970px;top:10px;width:1px;height:3px;background:#555;"></div>
<div class="a" style="left:982px;top:10px;width:1px;height:3px;background:#555;"></div>
<div class="a" style="left:1006px;top:10px;width:1px;height:3px;background:#555;"></div>
<div class="a" style="left:1018px;top:10px;width:1px;height:3px;background:#555;"></div>
<div class="a" style="left:1030px;top:10px;width:1px;height:3px;background:#555;"></div>
<div class="t" style="left:223px;top:7px;font-size:9.5px;color:#7d7d7d;font-weight:normal;line-height:10px">1</div>
<div class="t" style="left:415px;top:7px;font-size:9.5px;color:#7d7d7d;font-weight:normal;line-height:10px">1</div>
<div class="t" style="left:511px;top:7px;font-size:9.5px;color:#7d7d7d;font-weight:normal;line-height:10px">2</div>
<div class="t" style="left:607px;top:7px;font-size:9.5px;color:#7d7d7d;font-weight:normal;line-height:10px">3</div>
<div class="t" style="left:703px;top:7px;font-size:9.5px;color:#7d7d7d;font-weight:normal;line-height:10px">4</div>
<div class="t" style="left:799px;top:7px;font-size:9.5px;color:#7d7d7d;font-weight:normal;line-height:10px">5</div>
<div class="t" style="left:895px;top:7px;font-size:9.5px;color:#7d7d7d;font-weight:normal;line-height:10px">6</div>
<div class="t" style="left:991px;top:7px;font-size:9.5px;color:#7d7d7d;font-weight:normal;line-height:10px">7</div>
<div class="a" style="left:313px;top:6px;width:7px;height:11px;border-radius:2.5px;background:repeating-conic-gradient(#9a9a9a 0 25%,#e6e6e6 0 50%) 0 0/2px 2px;border:1px solid #b0b0b0"></div>
<div class="a" style="left:415px;top:6px;width:7px;height:11px;border-radius:2.5px;background:repeating-conic-gradient(#9a9a9a 0 25%,#e6e6e6 0 50%) 0 0/2px 2px;border:1px solid #b0b0b0"></div>
<div class="a" style="left:679px;top:6px;width:7px;height:11px;border-radius:2.5px;background:repeating-conic-gradient(#9a9a9a 0 25%,#e6e6e6 0 50%) 0 0/2px 2px;border:1px solid #b0b0b0"></div>
<div class="a" style="left:864px;top:6px;width:7px;height:11px;border-radius:2.5px;background:repeating-conic-gradient(#9a9a9a 0 25%,#e6e6e6 0 50%) 0 0/2px 2px;border:1px solid #b0b0b0"></div>
<div class="a" style="left:963px;top:6px;width:7px;height:11px;border-radius:2.5px;background:repeating-conic-gradient(#9a9a9a 0 25%,#e6e6e6 0 50%) 0 0/2px 2px;border:1px solid #b0b0b0"></div>
<div class="a" style="left:828px;top:19px;width:1px;height:2px;background:#666;"></div>
<div class="a" style="left:923px;top:19px;width:1px;height:2px;background:#666;"></div>
<svg class="a" style="left:869px;top:2px" width="11" height="22" viewBox="0 0 11 22"><path d="M0.5 0.5 H10.5 L5.5 9 L10.5 17.5 H0.5 L5.5 9Z" fill="#fff" stroke="#666"/><rect x="0.5" y="14.5" width="10" height="6" fill="#fff" stroke="#666"/></svg>
<svg class="a" style="left:954px;top:11px" width="11" height="8" viewBox="0 0 11 8"><path d="M0.5 7.5 L5.5 0.5 L10.5 7.5Z" fill="#fff" stroke="#666"/></svg>
<div class="a" style="left:5px;top:26px;width:13px;height:574px;background:#c6c6c6;"></div>
<div class="a" style="left:6px;top:74px;width:11px;height:28px;background:#fff;"></div>
<div class="a" style="left:6px;top:115px;width:11px;height:6px;background:#fff;"></div>
<div class="a" style="left:6px;top:134px;width:11px;height:8px;background:#fff;"></div>
<div class="a" style="left:6px;top:155px;width:11px;height:3px;background:#fff;"></div>
<div class="a" style="left:6px;top:171px;width:11px;height:3px;background:#fff;"></div>
<div class="a" style="left:6px;top:187px;width:11px;height:3px;background:#fff;"></div>
<div class="a" style="left:6px;top:203px;width:11px;height:59px;background:#fff;"></div>
<div class="a" style="left:6px;top:275px;width:11px;height:3px;background:#fff;"></div>
<div class="a" style="left:6px;top:291px;width:11px;height:3px;background:#fff;"></div>
<div class="a" style="left:6px;top:307px;width:11px;height:3px;background:#fff;"></div>
<div class="a" style="left:6px;top:323px;width:11px;height:59px;background:#fff;"></div>
<div class="a" style="left:6px;top:395px;width:11px;height:3px;background:#fff;"></div>
<div class="a" style="left:6px;top:411px;width:11px;height:3px;background:#fff;"></div>
<div class="a" style="left:6px;top:427px;width:11px;height:3px;background:#fff;"></div>
<div class="a" style="left:6px;top:443px;width:11px;height:59px;background:#fff;"></div>
<div class="a" style="left:6px;top:515px;width:11px;height:3px;background:#fff;"></div>
<div class="a" style="left:6px;top:531px;width:11px;height:3px;background:#fff;"></div>
<div class="a" style="left:6px;top:547px;width:11px;height:3px;background:#fff;"></div>
<div class="a" style="left:6px;top:563px;width:11px;height:59px;background:#fff;"></div>
<div class="a" style="left:10px;top:37px;width:3px;height:1px;background:#555;"></div>
<div class="a" style="left:10px;top:49px;width:3px;height:1px;background:#555;"></div>
<div class="a" style="left:10px;top:61px;width:3px;height:1px;background:#555;"></div>
<div class="a" style="left:10px;top:85px;width:3px;height:1px;background:#555;"></div>
<div class="a" style="left:10px;top:97px;width:3px;height:1px;background:#555;"></div>
<div class="a" style="left:10px;top:157px;width:3px;height:1px;background:#555;"></div>
<div class="a" style="left:10px;top:205px;width:3px;height:1px;background:#555;"></div>
<div class="a" style="left:9px;top:217px;width:5px;height:1px;background:#555;"></div>
<div class="a" style="left:10px;top:229px;width:3px;height:1px;background:#555;"></div>
<div class="a" style="left:10px;top:241px;width:3px;height:1px;background:#555;"></div>
<div class="a" style="left:10px;top:253px;width:3px;height:1px;background:#555;"></div>
<div class="a" style="left:10px;top:277px;width:3px;height:1px;background:#555;"></div>
<div class="a" style="left:10px;top:325px;width:3px;height:1px;background:#555;"></div>
<div class="a" style="left:10px;top:337px;width:3px;height:1px;background:#555;"></div>
<div class="a" style="left:10px;top:349px;width:3px;height:1px;background:#555;"></div>
<div class="a" style="left:10px;top:373px;width:3px;height:1px;background:#555;"></div>
<div class="a" style="left:10px;top:397px;width:3px;height:1px;background:#555;"></div>
<div class="a" style="left:10px;top:445px;width:3px;height:1px;background:#555;"></div>
<div class="a" style="left:10px;top:469px;width:3px;height:1px;background:#555;"></div>
<div class="a" style="left:10px;top:481px;width:3px;height:1px;background:#555;"></div>
<div class="a" style="left:10px;top:493px;width:3px;height:1px;background:#555;"></div>
<div class="a" style="left:10px;top:517px;width:3px;height:1px;background:#555;"></div>
<div class="a" style="left:10px;top:565px;width:3px;height:1px;background:#555;"></div>
<div class="a" style="left:10px;top:577px;width:3px;height:1px;background:#555;"></div>
<div class="a" style="left:10px;top:589px;width:3px;height:1px;background:#555;"></div>
<div class="t" style="left:7.5px;top:355px;font-size:9.5px;color:#7d7d7d;font-weight:normal;transform:rotate(-90deg);line-height:10px">3</div>
<div class="t" style="left:7.5px;top:451px;font-size:9.5px;color:#7d7d7d;font-weight:normal;transform:rotate(-90deg);line-height:10px">4</div>
<div class="a" style="left:6px;top:70px;width:7px;height:4px;border:1px solid #707070;border-radius:2px;background:#d8d8d8"></div>
<div class="a" style="left:225px;top:25px;width:816px;height:600px;background:#fff;border:1px solid #a8a8a8"></div>
<div class="a" style="left:315px;top:121px;width:101px;height:20px;background:#627869;"></div>
<div class="a" style="left:417px;top:121px;width:447px;height:20px;background:#627869;"></div>
<div class="a" style="left:865px;top:121px;width:99px;height:20px;background:#627869;"></div>
<div class="t" style="left:346px;top:123px;font-size:15.3px;color:#dfefe0;font-weight:normal;">Photo</div>
<div class="t" style="left:594px;top:123px;font-size:15.3px;color:#dfefe0;font-weight:normal;">Customer Info</div>
<div class="t" style="left:890px;top:123px;font-size:15.3px;color:#dfefe0;font-weight:normal;">Rentals</div>
<div class="a" style="left:315px;top:142px;width:101px;height:119px;background:#c5ddb6;"></div>
<div class="a" style="left:417px;top:142px;width:263px;height:15px;background:#c5ddb6;"></div>
<div class="a" style="left:681px;top:142px;width:183px;height:15px;background:#c5ddb6;"></div>
<div class="a" style="left:417px;top:158px;width:447px;height:15px;background:#e2edda;"></div>
<div class="a" style="left:417px;top:174px;width:263px;height:15px;background:#e2edda;"></div>
<div class="a" style="left:681px;top:174px;width:183px;height:15px;background:#e2edda;"></div>
<div class="a" style="left:417px;top:190px;width:447px;height:71px;background:#e2edda;"></div>
<div class="a" style="left:865px;top:142px;width:99px;height:119px;background:#bcd6c9;"></div>
<div class="t" style="left:425px;top:145px;font-size:11px;color:#2a2a2a;font-weight:bold;">Ryan Anita W</div>
<div class="t" style="left:689px;top:145px;font-size:11px;color:#2a2a2a;font-weight:bold;">Intermediate</div>
<div class="t" style="left:425px;top:161px;font-size:11px;color:#5e5e5e;font-weight:normal;">3/28/1984</div>
<div class="t" style="left:425px;top:177px;font-size:11px;color:#5e5e5e;font-weight:normal;">anita_ryan@dxvideorent.com</div>
<div class="t" style="left:689px;top:177px;font-size:11px;color:#5e5e5e;font-weight:normal;">(555)421-0059</div>
<div class="t" style="left:425px;top:193px;font-size:10.8px;color:#5e5e5e;font-weight:normal;">5119 Beryl Dr, San Antonio, TX 78212</div>
<svg class="a" style="left:885px;top:183px" width="60" height="40" viewBox="0 0 60 40"><path d="M14.2 13.6 L21.7 8.9 M21.7 8.3 V33.6 M40.1 9.1 C32.6 9.1 32.6 19.4 40.1 19.4 C47.6 19.4 47.6 9.1 40.1 9.1Z M40.1 19.4 C30.4 19.4 30.4 32.9 40.1 32.9 C49.8 32.9 49.8 19.4 40.1 19.4Z" fill="none" stroke="#4a4f4b" stroke-width="2.3" stroke-linejoin="bevel"/></svg>
<div class="a" style="left:315px;top:262px;width:101px;height:119px;background:#c5ddb6;"></div>
<div class="a" style="left:417px;top:262px;width:263px;height:15px;background:#c5ddb6;"></div>
<div class="a" style="left:681px;top:262px;width:183px;height:15px;background:#c5ddb6;"></div>
<div class="a" style="left:417px;top:278px;width:447px;height:15px;background:#e2edda;"></div>
<div class="a" style="left:417px;top:294px;width:263px;height:15px;background:#e2edda;"></div>
<div class="a" style="left:681px;top:294px;width:183px;height:15px;background:#e2edda;"></div>
<div class="a" style="left:417px;top:310px;width:447px;height:71px;background:#e2edda;"></div>
<div class="a" style="left:865px;top:262px;width:99px;height:119px;background:#bcd6c9;"></div>
<div class="t" style="left:425px;top:265px;font-size:11px;color:#2a2a2a;font-weight:bold;">Cardle Anita L</div>
<div class="t" style="left:689px;top:265px;font-size:11px;color:#2a2a2a;font-weight:bold;">Intermediate</div>
<div class="t" style="left:425px;top:281px;font-size:11px;color:#5e5e5e;font-weight:normal;">12/24/1984</div>
<div class="t" style="left:425px;top:297px;font-size:11px;color:#5e5e5e;font-weight:normal;">anita_cardle@dxvideorent.com</div>
<div class="t" style="left:689px;top:297px;font-size:11px;color:#5e5e5e;font-weight:normal;">(555)756-2345</div>
<div class="t" style="left:425px;top:313px;font-size:10.8px;color:#5e5e5e;font-weight:normal;">8512 Tanglewood Cir,  Reform, AL 35487</div>
<svg class="a" style="left:885px;top:303px" width="60" height="40" viewBox="0 0 60 40"><path d="M14.2 13.6 L21.7 8.9 M21.7 8.3 V33.6 M46.1 9.3 H34.6 L34 19.4 Q37 18.6 40 18.6 Q47.4 18.8 47.4 25.9 Q47.4 33.1 40 33.1 Q36 33.1 33.2 31.2" fill="none" stroke="#4a4f4b" stroke-width="2.3" stroke-linejoin="bevel"/></svg>
<div class="a" style="left:315px;top:382px;width:101px;height:119px;background:#c5ddb6;"></div>
<div class="a" style="left:417px;top:382px;width:263px;height:15px;background:#c5ddb6;"></div>
<div class="a" style="left:681px;top:382px;width:183px;height:15px;background:#c5ddb6;"></div>
<div class="a" style="left:417px;top:398px;width:447px;height:15px;background:#e2edda;"></div>
<div class="a" style="left:417px;top:414px;width:263px;height:15px;background:#e2edda;"></div>
<div class="a" style="left:681px;top:414px;width:183px;height:15px;background:#e2edda;"></div>
<div class="a" style="left:417px;top:430px;width:447px;height:71px;background:#e2edda;"></div>
<div class="a" style="left:865px;top:382px;width:99px;height:119px;background:#bcd6c9;"></div>
<div class="t" style="left:425px;top:385px;font-size:11px;color:#2a2a2a;font-weight:bold;">Borrmann Aaron Lewis</div>
<div class="t" style="left:689px;top:385px;font-size:11px;color:#2a2a2a;font-weight:bold;">Advanced</div>
<div class="t" style="left:425px;top:401px;font-size:11px;color:#5e5e5e;font-weight:normal;">8/20/1976</div>
<div class="t" style="left:425px;top:417px;font-size:11px;color:#5e5e5e;font-weight:normal;">aaron_borrmann@dxvideorent.com</div>
<div class="t" style="left:689px;top:417px;font-size:11px;color:#5e5e5e;font-weight:normal;">(555)533-3441</div>
<div class="t" style="left:425px;top:433px;font-size:10.8px;color:#5e5e5e;font-weight:normal;">824501 Rd P, Fort Jennings, OH 45842</div>
<svg class="a" style="left:885px;top:423px" width="60" height="40" viewBox="0 0 60 40"><path d="M14.2 13.6 L21.7 8.9 M21.7 8.3 V33.6 M46.1 9.3 H34.6 L34 19.4 Q37 18.6 40 18.6 Q47.4 18.8 47.4 25.9 Q47.4 33.1 40 33.1 Q36 33.1 33.2 31.2" fill="none" stroke="#4a4f4b" stroke-width="2.3" stroke-linejoin="bevel"/></svg>
<div class="a" style="left:315px;top:502px;width:101px;height:119px;background:#c5ddb6;"></div>
<div class="a" style="left:417px;top:502px;width:263px;height:15px;background:#c5ddb6;"></div>
<div class="a" style="left:681px;top:502px;width:183px;height:15px;background:#c5ddb6;"></div>
<div class="a" style="left:417px;top:518px;width:447px;height:15px;background:#e2edda;"></div>
<div class="a" style="left:417px;top:534px;width:263px;height:15px;background:#e2edda;"></div>
<div class="a" style="left:681px;top:534px;width:183px;height:15px;background:#e2edda;"></div>
<div class="a" style="left:417px;top:550px;width:447px;height:71px;background:#e2edda;"></div>
<div class="a" style="left:865px;top:502px;width:99px;height:119px;background:#bcd6c9;"></div>
<div class="t" style="left:425px;top:505px;font-size:11px;color:#2a2a2a;font-weight:bold;">Vicars Annie</div>
<div class="t" style="left:689px;top:505px;font-size:11px;color:#2a2a2a;font-weight:bold;">Intermediate</div>
<div class="t" style="left:425px;top:521px;font-size:11px;color:#5e5e5e;font-weight:normal;">12/24/1981</div>
<div class="t" style="left:425px;top:537px;font-size:11px;color:#5e5e5e;font-weight:normal;">annie_vicars@dxvideorent.com</div>
<div class="t" style="left:689px;top:537px;font-size:11px;color:#5e5e5e;font-weight:normal;">(555)922-1349</div>
<div class="t" style="left:425px;top:553px;font-size:10.8px;color:#5e5e5e;font-weight:normal;">7267 New York Ave, Jersey City, NJ 07306</div>
<svg class="a" style="left:885px;top:543px" width="60" height="40" viewBox="0 0 60 40"><path d="M14.2 13.6 L21.7 8.9 M21.7 8.3 V33.6 M44.1 33.6 V9.3 L31 26 H48.6" fill="none" stroke="#4a4f4b" stroke-width="2.3" stroke-linejoin="bevel"/></svg>
<svg class="a" style="left:325px;top:146px" width="82" height="111" viewBox="0 0 82 111"><defs><filter id="bl1" x="-10%" y="-10%" width="120%" height="120%"><feGaussianBlur stdDeviation="0.7"/></filter></defs><rect width="82" height="111" fill="#fff"/><g filter="url(#bl1)">
<path d="M8 70 C6 40 14 12 40 4 C62 0 76 22 77 48 C79 70 80 85 82 96 L82 111 L60 111 L44 62 Z" fill="#3a2420"/>
<path d="M0 111 L0 62 C4 56 10 53 17 54 L28 66 L56 70 C68 70 78 74 82 78 L82 111 Z" fill="#eeaad4"/>
<path d="M3 58 L15 54 L22 64 L16 70 Z" fill="#f6c8e2"/>
<path d="M12 62 L20 68 L14 76 Z" fill="#d46a78"/>
<path d="M46 50 C52 66 56 88 58 111 L78 111 C78 90 76 68 72 44 Z" fill="#2c1a16"/><path d="M76 72 C80 75 82 78 82 80 V111 H77 C78 95 77 85 76 72Z" fill="#eeaad4"/>
<ellipse cx="38" cy="38" rx="20" ry="24" transform="rotate(-8 38 38)" fill="#ebb7aa"/>
<path d="M18 30 C24 14 40 12 56 18 C46 12 28 10 18 30Z" fill="#3a2420"/>
<path d="M23 30 Q29 27 35 31" stroke="#4a3028" stroke-width="1.3" fill="none"/><ellipse cx="29" cy="34" rx="3.5" ry="1.6" fill="#4a3028"/>
<path d="M41 36 Q47 34 53 38" stroke="#4a3028" stroke-width="1.3" fill="none"/><ellipse cx="47" cy="40" rx="3.5" ry="1.6" fill="#4a3028"/>
<path d="M28 50 Q35 55 42 53" stroke="#f4e8e4" stroke-width="2.2" fill="none"/>
<path d="M27 49 Q35 57 43 52" stroke="#c06060" stroke-width="0.8" fill="none"/>
<path d="M4 111 L8 92 C10 82 14 72 18 66 L26 70 C24 82 22 96 24 111 Z" fill="#e6b0a2"/>
<path d="M16 63 C26 59 42 61 52 66 C50 71 42 72 36 73 C30 74 22 74 17 70 Z" fill="#eab6a8"/>
<path d="M30 72 L44 74 C50 84 56 96 64 111 L46 111 C42 98 36 86 30 72Z" fill="#e4ae9f"/>
<path d="M20 69 C28 68 36 70 40 73" stroke="#c98c78" stroke-width="0.9" fill="none"/>
<rect x="53" y="100" width="9" height="6" rx="2" fill="#8d8d8d" transform="rotate(-20 57 103)"/>
</g></svg>
<svg class="a" style="left:325px;top:266px" width="83" height="111" viewBox="0 0 83 111"><defs><filter id="bl2" x="-10%" y="-10%" width="120%" height="120%"><feGaussianBlur stdDeviation="0.7"/></filter></defs><rect width="83" height="111" fill="#fff"/><g filter="url(#bl2)">
<path d="M36 0 L78 0 C83 10 83 30 83 50 L83 111 L64 111 L50 72 L14 111 L3 111 C3 85 8 55 14 35 C20 18 28 5 36 0 Z" fill="#916a56"/>
<path d="M66 18 C72 40 74 70 74 111 L83 111 L83 28 Z" fill="#7a5040"/>
<ellipse cx="44.5" cy="45" rx="24.5" ry="29" transform="rotate(10 44.5 45)" fill="#efc5b2"/>
<path d="M22 30 C28 15 48 10 64 20 C54 9 34 9 22 30Z" fill="#916a56"/>
<ellipse cx="33" cy="43.5" rx="9.5" ry="5.5" transform="rotate(14 33 43.5)" fill="#e8bcaa" stroke="#3a2420" stroke-width="1.9"/>
<ellipse cx="56" cy="50.5" rx="10" ry="5.5" transform="rotate(14 56 50.5)" fill="#e8bcaa" stroke="#3a2420" stroke-width="1.9"/>
<path d="M23 39 L20 37 M42 47 L47 48.5" stroke="#3a2420" stroke-width="1.6"/>
<circle cx="33" cy="42" r="1.6" fill="#7890a0"/><circle cx="56" cy="49" r="1.6" fill="#7890a0"/>
<path d="M29 57 Q38 67 48 62" stroke="#d88890" stroke-width="4.5" fill="none"/>
<path d="M30 57.5 Q38 65 47 61.5" stroke="#fafafa" stroke-width="2.6" fill="none"/>
<path d="M14 111 L36 75 L55 66 L65 63 L69 87 L77 111 Z" fill="#eef0f5"/>
<path d="M40 90 L62 68 L66 95Z" fill="#dfe2ea"/>
<path d="M3 111 L4 98 L32 76 L40 75 L14 111 Z" fill="#1c2a4e"/>
</g></svg>
<svg class="a" style="left:320px;top:390px" width="92" height="104" viewBox="0 0 92 104"><defs><filter id="bl3" x="-10%" y="-10%" width="120%" height="120%"><feGaussianBlur stdDeviation="0.7"/></filter></defs><rect width="92" height="104" fill="#fff"/><g filter="url(#bl3)">
<path d="M35 30 C32 10 42 3 51 3 C62 3 68 10 66 30 Z" fill="#2a1c18"/>
<path d="M42 40 L60 40 L62 54 L51 62 L40 54 Z" fill="#c79a80"/>
<path d="M2 104 C3 84 8 66 20 58 L41 49 L51 60 L62 49 L80 57 C89 65 91 84 90 104 Z" fill="#bdb4a3"/>
<path d="M23 86 L24 104 L20 104 Z" fill="#70665a"/>
<path d="M71 90 L71 104 L75 104Z" fill="#70665a"/>
<path d="M36 50 L42 48 L50 62 L40 58Z" fill="#d2cabb"/>
<path d="M66 50 L60 48 L52 62 L62 58Z" fill="#d2cabb"/>
<path d="M51 62 V104" stroke="#a89e8c" stroke-width="0.8"/>
<ellipse cx="51" cy="28" rx="13" ry="16.5" fill="#cfa089"/>
<ellipse cx="38" cy="29" rx="2.5" ry="4" fill="#c49480"/>
<ellipse cx="64.5" cy="29" rx="2.5" ry="4" fill="#c49480"/>
<path d="M37.5 22 C37 12 44 8 51 8 C58 8 65 12 64.5 22 C61 15 56 13 51 13 C45 13 40 15 37.5 22Z" fill="#2a1c18"/>
<path d="M42 22.5 H48 M54 22.5 H60" stroke="#2a1e1a" stroke-width="1.6"/>
<path d="M43 25 H47 M55 25 H59" stroke="#5a4038" stroke-width="1.2"/>
<path d="M44 35 Q51 39.5 58 35" stroke="#f6f0ea" stroke-width="2.2" fill="none"/>
</g></svg>
<svg class="a" style="left:324px;top:506px" width="84" height="94" viewBox="0 0 84 94"><defs><filter id="bl4" x="-10%" y="-10%" width="120%" height="120%"><feGaussianBlur stdDeviation="0.7"/></filter></defs><rect width="84" height="94" fill="#fff"/><g filter="url(#bl4)">
<path d="M25 56 C21 30 30 5 52 3 C70 2 77 18 77 40 C78 55 82 66 81 76 C79 84 74 86 69 83 C65 72 61 62 54 56 Z" fill="#6b3a22"/>
<path d="M60 28 C68 45 70 62 72 82 L79 78 C80 64 78 48 73 32Z" fill="#55301c"/>
<path d="M34 48 L56 50 L58 64 L34 64Z" fill="#e6b496"/><path d="M13 94 C17 80 25 66 36 60 L54 61 C64 66 72 78 75 94 Z" fill="#eec4aa"/>
<path d="M50 70 C60 72 68 82 70 94 L58 94 C58 84 55 76 50 70Z" fill="#f2d2bc"/>
<ellipse cx="42" cy="36" rx="15.5" ry="21.5" transform="rotate(15 42 36)" fill="#eebb9e"/>
<path d="M27 24 C33 11 50 9 59 22 C52 13 36 10 27 24Z" fill="#6b3a22"/>
<path d="M33 30 Q36 28 40 31 M48 36 Q51 35 54 38" stroke="#4a2a20" stroke-width="1.6" fill="none"/>
<path d="M32 44 Q38 50 45 48" stroke="#f6f0ee" stroke-width="2.8" fill="none"/>
<path d="M31 43 Q38 52 46 48" stroke="#c86a6a" stroke-width="0.8" fill="none"/>
<path d="M12 94 L17 82 L32 85 L34 94 Z" fill="#f6f6f6"/>
<path d="M32 85 L62 67" stroke="#f4f4f4" stroke-width="1.4"/>
</g></svg>
<div class="a" style="left:556px;top:35px;width:472px;height:69px;background:#f0f0f0;border:1px solid #a8a8a8;box-shadow:5px 4px 2px -2px rgba(0,0,0,0.42)"></div>
<div class="t" style="left:561px;top:41px;font-size:11.3px;color:#333;font-weight:bold;">Borders &amp;&amp; Shadings</div>
<svg class="a" style="left:988px;top:44px" width="9" height="5" viewBox="0 0 9 5"><path d="M0 0 H9 L4.5 5Z" fill="#666"/></svg>
<svg class="a" style="left:1012px;top:42px" width="10" height="9" viewBox="0 0 10 9"><path d="M1 1 L9 8 M9 1 L1 8" stroke="#555" stroke-width="1.4"/></svg>
<div class="a" style="left:572px;top:70px;width:130px;height:20px;background:#fff;border:1px solid #a9a9a9"></div>
<div class="a" style="left:685px;top:71px;width:1px;height:18px;background:#c8c8c8;"></div>
<svg class="a" style="left:690px;top:79px" width="6" height="4" viewBox="0 0 6 4"><path d="M0 0 H6 L3 3.5Z" fill="#707070"/></svg>
<div class="a" style="left:576px;top:80px;width:109px;height:1px;background:#111;"></div>
<div class="a" style="left:710px;top:70px;width:130px;height:20px;background:#fff;border:1px solid #a9a9a9"></div>
<div class="a" style="left:823px;top:71px;width:1px;height:18px;background:#c8c8c8;"></div>
<svg class="a" style="left:828px;top:79px" width="6" height="4" viewBox="0 0 6 4"><path d="M0 0 H6 L3 3.5Z" fill="#707070"/></svg>
<div class="t" style="left:714px;top:75px;font-size:11.4px;color:#333;font-weight:normal;">0.5 pt</div>
<div class="a" style="left:777px;top:80px;width:40px;height:1px;background:#111;"></div>
<svg class="a" style="left:851px;top:73px" width="11" height="11" viewBox="0 0 14 14"><path d="M1 12.5 L2 9 L9.5 1.5 L12 4 L4.5 11.5 Z" fill="#6a9ee0" stroke="#2f5fa0" stroke-width="0.7"/><path d="M8.3 2.7 L9.8 1.2 Q10.6 0.5 11.4 1.2 L12.4 2.2 Q13 3 12.3 3.8 L10.8 5.3Z" fill="#e03838"/><path d="M1 12.5 L2 9 L4.5 11.5Z" fill="#333"/></svg>
<div class="a" style="left:850px;top:85px;width:14px;height:3px;background:#000;"></div>
<svg class="a" style="left:875px;top:79px" width="6" height="4" viewBox="0 0 6 4"><path d="M0 0 H6 L3 3.5Z" fill="#444"/></svg>
<div class="t" style="left:893px;top:74px;font-size:11.3px;color:#333;font-weight:normal;">Borders</div>
<svg class="a" style="left:936px;top:79px" width="6" height="4" viewBox="0 0 6 4"><path d="M0 0 H6 L3 3.5Z" fill="#444"/></svg>
<div class="a" style="left:947px;top:68px;width:43px;height:24px;background:#c9c9c9;"></div>
<svg class="a" style="left:953px;top:70px" width="16" height="15" viewBox="0 0 16 15"><path d="M1 6 L6 1.5 L12 7 L7 11.5 Z" fill="#dfe9f6" stroke="#2a3550" stroke-width="1"/><path d="M1 6 L12 7" stroke="#2a3550" stroke-width="0.8"/><path d="M6 1.5 Q4 0 3 1.5" fill="none" stroke="#2a3550" stroke-width="0.9"/><path d="M11.5 4 Q14.5 5 14.5 9 Q14.5 11 13.5 11 Q12.5 11 12.5 9.5 Q12.5 7 11.5 5.5Z" fill="#3f86d8"/></svg>
<div class="a" style="left:953px;top:85px;width:14px;height:3px;background:#000;"></div>
<svg class="a" style="left:979px;top:79px" width="6" height="4" viewBox="0 0 6 4"><path d="M0 0 H6 L3 3.5Z" fill="#444"/></svg>
<svg class="a" style="left:997px;top:72px" width="12" height="15" viewBox="0 0 12 15"><rect x="0.5" y="0.5" width="11" height="14" rx="1" fill="#f4f8fd" stroke="#7aa4dc"/><rect x="3.5" y="3.5" width="5" height="8" fill="#fff" stroke="#c82828" stroke-width="1.1"/></svg>
<div class="a" style="left:947px;top:92px;width:268px;height:241px;background:#fff;border:1px solid #a8a8a8;box-shadow:1px 1px 2px rgba(0,0,0,0.2)"></div>
<div class="a" style="left:949px;top:94px;width:1px;height:237px;background:#c0c0c0;"></div>
<div class="a" style="left:949px;top:94px;width:264px;height:1px;background:#c0c0c0;"></div>
<div class="t" style="left:977px;top:107px;font-size:10.3px;color:#333;font-weight:normal;">No Color</div>
<div class="a" style="left:952px;top:129px;width:260px;height:23px;background:#ececec;"></div>
<div class="t" style="left:956px;top:136px;font-size:11.5px;color:#767676;font-weight:bold;">Theme Colors</div>
<div class="a" style="left:956px;top:156px;width:17px;height:16px;background:#FFFFFF;border:1px solid #858585"></div>
<div class="a" style="left:956px;top:175px;width:17px;height:76px;border:1px solid #858585;background:#858585">
<div class="a" style="left:0;top:0px;width:15px;height:14px;background:#F2F2F2"></div>
<div class="a" style="left:0;top:15px;width:15px;height:14px;background:#D8D8D8"></div>
<div class="a" style="left:0;top:30px;width:15px;height:14px;background:#BFBFBF"></div>
<div class="a" style="left:0;top:45px;width:15px;height:14px;background:#A5A5A5"></div>
<div class="a" style="left:0;top:60px;width:15px;height:14px;background:#7F7F7F"></div>
</div>
<div class="a" style="left:982px;top:156px;width:17px;height:16px;background:#000000;border:1px solid #858585"></div>
<div class="a" style="left:982px;top:175px;width:17px;height:76px;border:1px solid #858585;background:#858585">
<div class="a" style="left:0;top:0px;width:15px;height:14px;background:#7F7F7F"></div>
<div class="a" style="left:0;top:15px;width:15px;height:14px;background:#595959"></div>
<div class="a" style="left:0;top:30px;width:15px;height:14px;background:#3F3F3F"></div>
<div class="a" style="left:0;top:45px;width:15px;height:14px;background:#262626"></div>
<div class="a" style="left:0;top:60px;width:15px;height:14px;background:#0C0C0C"></div>
</div>
<div class="a" style="left:1008px;top:156px;width:17px;height:16px;background:#EEECE1;border:1px solid #858585"></div>
<div class="a" style="left:1008px;top:175px;width:17px;height:76px;border:1px solid #858585;background:#858585">
<div class="a" style="left:0;top:0px;width:15px;height:14px;background:#DDD9C3"></div>
<div class="a" style="left:0;top:15px;width:15px;height:14px;background:#C4BD97"></div>
<div class="a" style="left:0;top:30px;width:15px;height:14px;background:#938953"></div>
<div class="a" style="left:0;top:45px;width:15px;height:14px;background:#494429"></div>
<div class="a" style="left:0;top:60px;width:15px;height:14px;background:#1D1B10"></div>
</div>
<div class="a" style="left:1034px;top:156px;width:17px;height:16px;background:#1F497D;border:1px solid #858585"></div>
<div class="a" style="left:1034px;top:175px;width:17px;height:76px;border:1px solid #858585;background:#858585">
<div class="a" style="left:0;top:0px;width:15px;height:14px;background:#C6D9F0"></div>
<div class="a" style="left:0;top:15px;width:15px;height:14px;background:#8DB3E2"></div>
<div class="a" style="left:0;top:30px;width:15px;height:14px;background:#548DD4"></div>
<div class="a" style="left:0;top:45px;width:15px;height:14px;background:#17365D"></div>
<div class="a" style="left:0;top:60px;width:15px;height:14px;background:#0F243E"></div>
</div>
<div class="a" style="left:1060px;top:156px;width:17px;height:16px;background:#4F81BD;border:1px solid #858585"></div>
<div class="a" style="left:1060px;top:175px;width:17px;height:76px;border:1px solid #858585;background:#858585">
<div class="a" style="left:0;top:0px;width:15px;height:14px;background:#DBE5F1"></div>
<div class="a" style="left:0;top:15px;width:15px;height:14px;background:#B8CCE4"></div>
<div class="a" style="left:0;top:30px;width:15px;height:14px;background:#95B3D7"></div>
<div class="a" style="left:0;top:45px;width:15px;height:14px;background:#366092"></div>
<div class="a" style="left:0;top:60px;width:15px;height:14px;background:#244061"></div>
</div>
<div class="a" style="left:1086px;top:156px;width:17px;height:16px;background:#C0504D;border:1px solid #858585"></div>
<div class="a" style="left:1086px;top:175px;width:17px;height:76px;border:1px solid #858585;background:#858585">
<div class="a" style="left:0;top:0px;width:15px;height:14px;background:#F2DCDB"></div>
<div class="a" style="left:0;top:15px;width:15px;height:14px;background:#E5B9B7"></div>
<div class="a" style="left:0;top:30px;width:15px;height:14px;background:#D99694"></div>
<div class="a" style="left:0;top:45px;width:15px;height:14px;background:#953734"></div>
<div class="a" style="left:0;top:60px;width:15px;height:14px;background:#632423"></div>
</div>
<div class="a" style="left:1112px;top:156px;width:17px;height:16px;background:#9BBB59;border:1px solid #858585"></div>
<div class="a" style="left:1112px;top:175px;width:17px;height:76px;border:1px solid #858585;background:#858585">
<div class="a" style="left:0;top:0px;width:15px;height:14px;background:#EBF1DD"></div>
<div class="a" style="left:0;top:15px;width:15px;height:14px;background:#D7E3BC"></div>
<div class="a" style="left:0;top:30px;width:15px;height:14px;background:#C3D69B"></div>
<div class="a" style="left:0;top:45px;width:15px;height:14px;background:#76923C"></div>
<div class="a" style="left:0;top:60px;width:15px;height:14px;background:#4F6128"></div>
</div>
<div class="a" style="left:1138px;top:156px;width:17px;height:16px;background:#8064A2;border:1px solid #858585"></div>
<div class="a" style="left:1138px;top:175px;width:17px;height:76px;border:1px solid #858585;background:#858585">
<div class="a" style="left:0;top:0px;width:15px;height:14px;background:#E5E0EC"></div>
<div class="a" style="left:0;top:15px;width:15px;height:14px;background:#CCC1D9"></div>
<div class="a" style="left:0;top:30px;width:15px;height:14px;background:#B2A2C7"></div>
<div class="a" style="left:0;top:45px;width:15px;height:14px;background:#5F497A"></div>
<div class="a" style="left:0;top:60px;width:15px;height:14px;background:#3F3151"></div>
</div>
<div class="a" style="left:1164px;top:156px;width:17px;height:16px;background:#4BACC6;border:1px solid #858585"></div>
<div class="a" style="left:1164px;top:175px;width:17px;height:76px;border:1px solid #858585;background:#858585">
<div class="a" style="left:0;top:0px;width:15px;height:14px;background:#DBEEF3"></div>
<div class="a" style="left:0;top:15px;width:15px;height:14px;background:#B7DDE8"></div>
<div class="a" style="left:0;top:30px;width:15px;height:14px;background:#92CDDC"></div>
<div class="a" style="left:0;top:45px;width:15px;height:14px;background:#31859B"></div>
<div class="a" style="left:0;top:60px;width:15px;height:14px;background:#205867"></div>
</div>
<div class="a" style="left:1190px;top:156px;width:17px;height:16px;background:#F79646;border:1px solid #858585"></div>
<div class="a" style="left:1190px;top:175px;width:17px;height:76px;border:1px solid #858585;background:#858585">
<div class="a" style="left:0;top:0px;width:15px;height:14px;background:#FDEADA"></div>
<div class="a" style="left:0;top:15px;width:15px;height:14px;background:#FBD5B5"></div>
<div class="a" style="left:0;top:30px;width:15px;height:14px;background:#FAC08F"></div>
<div class="a" style="left:0;top:45px;width:15px;height:14px;background:#E36C09"></div>
<div class="a" style="left:0;top:60px;width:15px;height:14px;background:#974806"></div>
</div>
<div class="a" style="left:952px;top:255px;width:260px;height:23px;background:#ececec;"></div>
<div class="t" style="left:956px;top:262px;font-size:11.5px;color:#767676;font-weight:bold;">Standard Colors</div>
<div class="a" style="left:956px;top:282px;width:17px;height:16px;background:#C00000;border:1px solid #858585"></div>
<div class="a" style="left:982px;top:282px;width:17px;height:16px;background:#FF0000;border:1px solid #858585"></div>
<div class="a" style="left:1008px;top:282px;width:17px;height:16px;background:#FFC000;border:1px solid #858585"></div>
<div class="a" style="left:1034px;top:282px;width:17px;height:16px;background:#FFFF00;border:1px solid #858585"></div>
<div class="a" style="left:1060px;top:282px;width:17px;height:16px;background:#92D050;border:1px solid #858585"></div>
<div class="a" style="left:1086px;top:282px;width:17px;height:16px;background:#00B050;border:1px solid #858585"></div>
<div class="a" style="left:1112px;top:282px;width:17px;height:16px;background:#00B0F0;border:1px solid #858585"></div>
<div class="a" style="left:1138px;top:282px;width:17px;height:16px;background:#0070C0;border:1px solid #858585"></div>
<div class="a" style="left:1164px;top:282px;width:17px;height:16px;background:#002060;border:1px solid #858585"></div>
<div class="a" style="left:1190px;top:282px;width:17px;height:16px;background:#7030A0;border:1px solid #858585"></div>
<svg class="a" style="left:956px;top:309px" width="17" height="14" viewBox="0 0 17 14"><path d="M8 0.5 Q16 0.5 16 6 Q16 10 12 9.5 Q9.5 9.5 10 12 Q10 13.5 7 13.5 Q0.5 13 0.5 7 Q0.5 0.5 8 0.5Z" fill="#f3c27a" stroke="#c0762a" stroke-width="0.9"/><circle cx="6" cy="3.5" r="1.3" fill="#3aa040"/><circle cx="10" cy="3.5" r="1.5" fill="#e04a5a"/><circle cx="13" cy="6.5" r="1.2" fill="#3a70d0"/><circle cx="4.5" cy="8" r="1.2" fill="#fff" stroke="#c0762a" stroke-width="0.6"/></svg>
<div class="t" style="left:980px;top:311px;font-size:11px;color:#333;font-weight:normal;">More Colors...</div>
</div>
</body></html>
